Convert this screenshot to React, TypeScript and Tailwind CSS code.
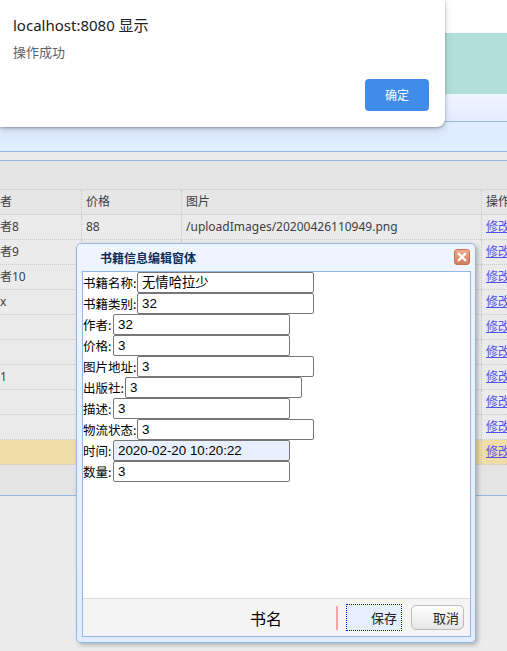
import React from "react";

const sans = { fontFamily: '"Noto Sans", "Noto Sans CJK SC", sans-serif' };
const cjk = { fontFamily: '"Noto Sans CJK SC", sans-serif' };

type Row = { a: string; b: string; c: string; hl?: boolean };

const rows: Row[] = [
  { a: "者8", b: "88", c: "/uploadImages/20200426110949.png" },
  { a: "者9", b: "", c: "" },
  { a: "者10", b: "", c: "" },
  { a: "x", b: "", c: "" },
  { a: "", b: "", c: "" },
  { a: "", b: "", c: "" },
  { a: "1", b: "", c: "" },
  { a: "", b: "", c: "" },
  { a: "", b: "", c: "" },
  { a: "", b: "", c: "", hl: true },
];

const fields: { label: string; lw: string; value: string; fill?: boolean }[] = [
  { label: "书籍名称:", lw: "w-[54px]", value: "无情哈拉少" },
  { label: "书籍类别:", lw: "w-[54px]", value: "32" },
  { label: "作者:", lw: "w-[30px]", value: "32" },
  { label: "价格:", lw: "w-[30px]", value: "3" },
  { label: "图片地址:", lw: "w-[54px]", value: "3" },
  { label: "出版社:", lw: "w-[42px]", value: "3" },
  { label: "描述:", lw: "w-[30px]", value: "3" },
  { label: "物流状态:", lw: "w-[54px]", value: "3" },
  { label: "时间:", lw: "w-[30px]", value: "2020-02-20 10:20:22", fill: true },
  { label: "数量:", lw: "w-[30px]", value: "3" },
];

export default function App() {
  return (
    <div className="relative w-[507px] h-[651px] overflow-hidden bg-[#ebebeb]" style={sans}>
      {/* page background */}
      <div className="h-[33px] bg-white" />
      <div className="h-[61px] bg-[#b2dfd9]" />
      <div className="h-[28px] bg-gradient-to-b from-[#eff5ff] to-[#e3edff] border-b border-[#95b8e7]" />
      <div className="h-[30px] bg-[#e0ecff] border-b border-[#95b8e7]" />
      <div className="h-[9px] bg-[#ebebeb] border-b border-[#95b8e7]" />
      <div className="bg-[#e4e4e4] border-b border-[#95b8e7]">
        <div className="h-[28px]" />
        <div className="flex h-[26px] border-y border-[#d6d6d6] bg-[#e6e6e6] text-[12px] text-[#404040]">
          <div className="w-[82px] shrink-0 flex items-center border-r border-dotted border-[#c8c8c8]">者</div>
          <div className="w-[100px] shrink-0 flex items-center pl-[4px] border-r border-dotted border-[#c8c8c8]">价格</div>
          <div className="w-[300px] shrink-0 flex items-center pl-[4px] border-r border-dotted border-[#c8c8c8]">图片</div>
          <div className="flex-1 flex items-center pl-[4px] whitespace-nowrap overflow-hidden">操作</div>
        </div>
        {rows.map((r, i) => (
          <div
            key={i}
            className={`flex h-[25px] border-b border-dotted border-[#c8c8c8] text-[12px] text-[#404040] ${
              r.hl ? "bg-[#efdca8]" : "bg-[#ebebeb]"
            }`}
          >
            <div className="w-[82px] shrink-0 flex items-center border-r border-dotted border-[#c8c8c8]">{r.a}</div>
            <div className="w-[100px] shrink-0 flex items-center pl-[4px] border-r border-dotted border-[#c8c8c8]">{r.b}</div>
            <div className="w-[300px] shrink-0 flex items-center pl-[4px] border-r border-dotted border-[#c8c8c8]">{r.c}</div>
            <div className="flex-1 flex items-center pl-[4px] whitespace-nowrap overflow-hidden">
              <span className="underline text-[#5252f0]">修改</span>
            </div>
          </div>
        ))}
        <div className="h-[30px]" />
      </div>

      {/* edit window */}
      <div className="absolute left-[76px] top-[243px] w-[400px] h-[400px] border border-[#95b8e7] rounded-[5px] bg-gradient-to-b from-[#eff5ff] to-[#e0ecff] pl-[5px] pr-[4px] pb-[5px] flex flex-col shadow-[2px_2px_4px_rgba(0,0,0,0.25)]">
        <div className="relative h-[27px] shrink-0 flex items-center pl-[18px]">
          <span className="text-[12px] font-bold text-[#0e2d5f]" style={cjk}>
            书籍信息编辑窗体
          </span>
          <div className="absolute right-[1px] top-[5px] w-[16px] h-[16px] rounded-[3px] border border-[#c27355] bg-gradient-to-b from-[#eeab8d] to-[#d47d5d] flex items-center justify-center">
            <svg width="10" height="10" viewBox="0 0 10 10">
              <path d="M2 2 L8 8 M8 2 L2 8" stroke="white" strokeWidth="2.4" strokeLinecap="square" />
            </svg>
          </div>
        </div>
        <div className="w-[389px] flex-1 border border-[#95b8e7] bg-white flex flex-col">
          <div className="flex-1 flex flex-col">
            {fields.map((f, i) => (
              <div key={i} className="flex items-center h-[21px]">
                <span
                  className={`${f.lw} shrink-0 text-[12.5px] leading-[21px] text-black whitespace-nowrap`}
                  style={cjk}
                >
                  {f.label}
                </span>
                <div
                  className={`w-[177px] h-[21px] shrink-0 border border-[#767676] rounded-[2px] flex items-center pl-[4px] text-[13.33px] text-black ${
                    f.fill ? "bg-[#e8f0fe]" : "bg-white"
                  }`}
                  style={{ fontFamily: '"Liberation Sans", "Noto Sans CJK SC", sans-serif' }}
                >
                  {f.value}
                </div>
              </div>
            ))}
          </div>
          <div className="h-[38px] shrink-0 border-t border-[#dddddd] bg-[#f4f4f4] flex items-center justify-end pr-[6px]">
            <span className="text-[16px] text-black mr-[54px]" style={cjk}>
              书名
            </span>
            <div className="w-[2px] h-[24px] bg-[#f4a4a4] mr-[8px]" />
            <div className="w-[56px] h-[27px] border border-dotted border-[#0000ff] mr-[9px]">
              <div className="w-full h-full rounded-[4px] bg-[#e6effe] flex items-center justify-end pr-[4px]">
                <span className="text-[13px] text-[#222]" style={cjk}>保存</span>
              </div>
            </div>
            <div className="w-[53px] h-[25px] rounded-[5px] border border-[#bbbbbb] bg-gradient-to-b from-white to-[#e6e6e6] flex items-center justify-end pr-[4px]">
              <span className="text-[13px] text-[#222]" style={cjk}>取消</span>
            </div>
          </div>
        </div>
      </div>

      {/* browser alert */}
      <div className="absolute left-0 top-0 w-[445px] h-[127px] bg-white rounded-br-[8px] shadow-[0_1px_3px_rgba(0,0,0,0.35),0_4px_8px_rgba(60,64,67,0.15)]">
        <div className="absolute left-[13px] top-[14px] text-[15px] text-[#202124] whitespace-nowrap">localhost:8080 显示</div>
        <div className="absolute left-[13px] top-[42px] text-[13px] text-[#5f6368] whitespace-nowrap" style={cjk}>
          操作成功
        </div>
        <div className="absolute left-[365px] top-[79px] w-[64px] h-[32px] rounded-[4px] bg-[#418be9] flex items-center justify-center text-white text-[12px]" style={cjk}>
          确定
        </div>
      </div>
    </div>
  );
}
